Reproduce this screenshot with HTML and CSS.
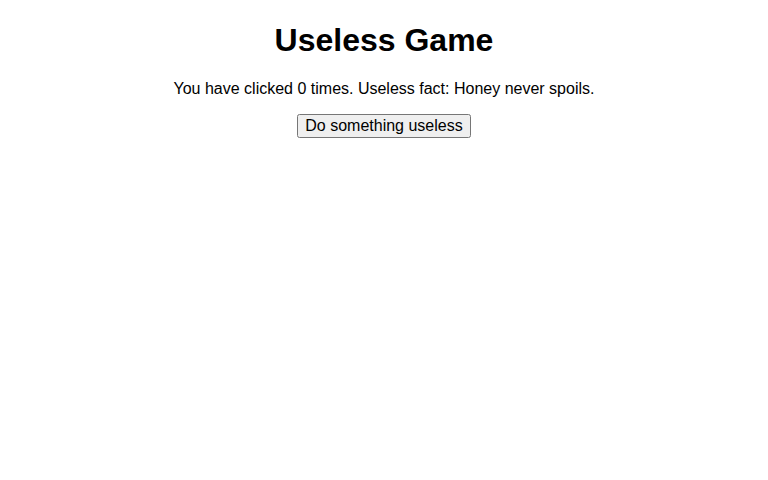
FILE: index.html
```html
<!DOCTYPE html>
<html lang="en">
<head>
<meta charset="UTF-8">
<title>Useless Game</title>
<meta name="viewport" content="width=device-width, initial-scale=1.0">
<link rel="stylesheet" href="styles.css">
</head>
<body>

<h1>Useless Game</h1>
<p id="message">You have clicked 0 times. Useless fact: Honey never spoils.</p>
<button id="uselessButton" class="useless-button" onclick="doUseless()">Do something useless</button>

<script>
var clicks = 0;
var facts = [
  "Honey never spoils.",
  "Bananas are berries.",
  "Octopuses have three hearts.",
  "A group of flamingos is called a flamboyance."
];
function doUseless() {
  clicks++;
  var fact = facts[clicks % facts.length];
  document.getElementById('message').textContent =
    "You have clicked " + clicks + " times. Useless fact: " + fact;
}
</script>
</body>
</html>
```

FILE: styles.css
```css
body {
  font-family: "Liberation Sans", Arial, sans-serif;
  text-align: center;
  background-color: #fff;
  color: #000;
  margin: 0 8px;
}

h1 {
  margin-top: 22px;
}

.useless-button {
  font-family: "Liberation Sans", Arial, sans-serif;
  font-size: 16px;
  cursor: pointer;
}
```
